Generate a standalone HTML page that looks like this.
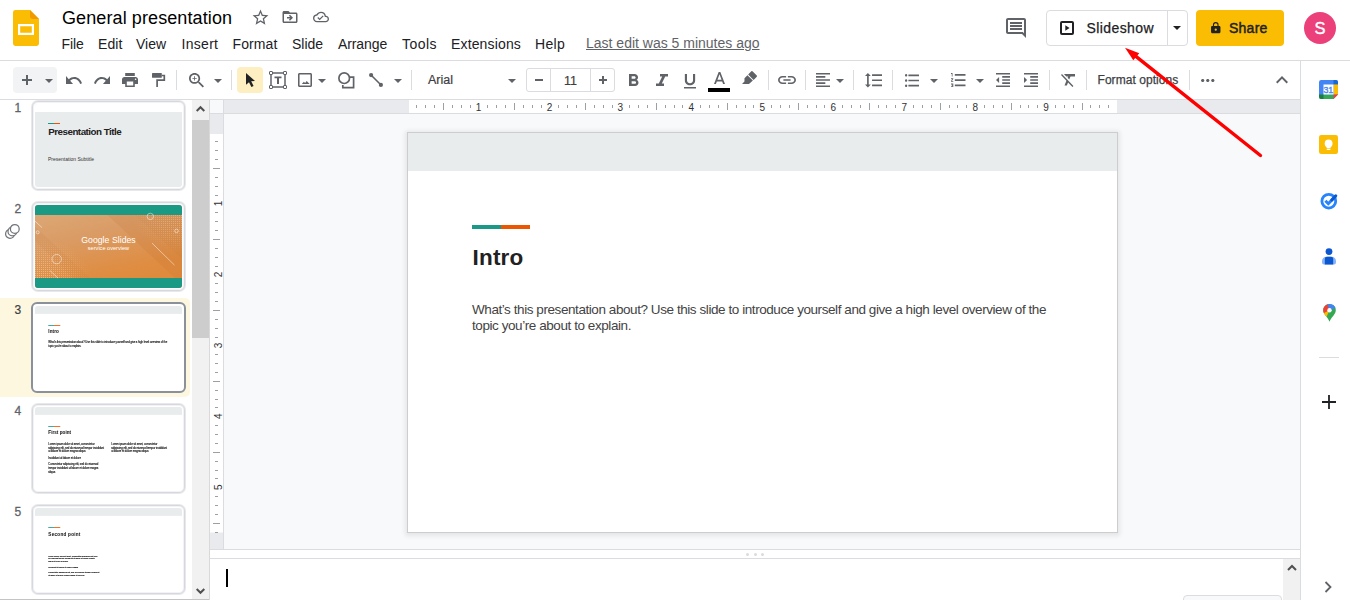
<!DOCTYPE html>
<html lang="en">
<head>
<meta charset="utf-8">
<title>General presentation - Google Slides</title>
<style>
*{box-sizing:border-box;margin:0;padding:0}
html,body{width:1350px;height:600px;overflow:hidden;background:#fff}
body{position:relative;font-family:"Liberation Sans",Arial,sans-serif;color:#202124;-webkit-font-smoothing:antialiased}
.abs{position:absolute}
.t{position:absolute;white-space:nowrap;line-height:1}
svg{position:absolute;overflow:visible}
/* header */
#hdr{position:absolute;left:0;top:0;width:1350px;height:61px;background:#fff;border-bottom:1px solid #dadce0}
#title{left:62px;top:8px;font-size:18px;line-height:20px;color:#000}
.menu{font-size:14px;top:36px;line-height:16px;color:#202124}
#lastedit{color:#5f6368;text-decoration:underline;top:35px}
/* toolbar */
#tb{position:absolute;left:0;top:61px;width:1300px;height:39px;background:#fff;border-bottom:1px solid #dadce0}
.sep{position:absolute;top:70px;width:1px;height:20px;background:#dadce0}
.dd{position:absolute;width:0;height:0;border-left:4px solid transparent;border-right:4px solid transparent;border-top:4px solid #5f6368;top:79px}
/* side panel */
#side{position:absolute;left:1300px;top:61px;width:50px;height:539px;background:#fff;border-left:1px solid #dadce0}
/* filmstrip */
#film{position:absolute;left:0;top:100px;width:192px;height:500px;background:#fff;overflow:hidden}
.num{position:absolute;font-size:12px;line-height:12px;color:#5f6368;width:21.200px;text-align:right;left:0;-webkit-text-stroke:.3px #5f6368}
.th{position:absolute;left:32px;width:153px;height:89px;border:1px solid #d6d8dd;border-radius:6px;background:#fff;overflow:hidden;box-shadow:0 0 0 1px rgba(214,216,221,.6),inset 0 0 0 1px rgba(214,216,221,.3)}
.th .ts{position:absolute;left:2px;top:2px;width:147px;height:83px;background:#fff;overflow:hidden;border-radius:3px}
.th.sel{left:31px;width:155px;height:91px;border:2px solid #8a919b;border-radius:6px;padding:0;box-shadow:none}
.th.sel .ts{left:2px;top:2px}
.sl{position:absolute;left:0;top:0;width:710px;height:400px;transform:scale(.20704);transform-origin:0 0;background:#fff;overflow:hidden}
.tband{position:absolute;left:0;top:0;width:147px;height:7.800px;background:#e9ecec}
.tacc{position:absolute;left:13px;width:12px;height:1px;background:linear-gradient(90deg,#1a9988 0,#1a9988 50%,#eb5600 50%,#eb5600 100%)}
.tt{font-weight:bold;color:#212121}
#vsb{position:absolute;left:192px;top:100px;width:17px;height:500px;background:#f1f1f1}
/* rulers + canvas */
#corner{position:absolute;left:210px;top:100px;width:14px;height:14px;background:#f8f9fa;border-right:1px solid #dadce0;border-bottom:1px solid #dadce0}
#hr{position:absolute;left:224px;top:100px;width:1076px;height:14px;background:#e8eaed;border-bottom:1px solid #dadce0;overflow:hidden}
#vr{position:absolute;left:210px;top:114px;width:14px;height:435px;background:#e8eaed;border-right:1px solid #dadce0;overflow:hidden}
#canvas{position:absolute;left:224px;top:114px;width:1076px;height:435px;background:#f8f9fa}
#slide{position:absolute;left:407px;top:132px;width:711px;height:401px;background:#fff;border:1px solid #cdcdcd;box-shadow:0 1px 4px 2px rgba(60,64,67,.1);overflow:hidden}
.band{position:absolute;left:0;top:0;width:710px;height:38px;background:#e9ecec}
.acc{position:absolute;left:65px;top:93px;width:58px;height:4px;background:linear-gradient(90deg,#1a9988 0,#1a9988 50%,#eb5600 50%,#eb5600 100%)}
.h1{position:absolute;left:65px;font-weight:bold;color:#212121;white-space:nowrap}
.bd{position:absolute;color:#434343}
.sl .bd{color:#1a1a1a;-webkit-text-stroke:.6px #1a1a1a}
.sl .h1{-webkit-text-stroke:.3px #212121}
/* notes */
#notes{position:absolute;left:210px;top:549px;width:1090px;height:51px;background:#fff;border-top:1px solid #dadce0}
</style>
</head>
<body>
<!-- HEADER -->
<div id="hdr">
<!-- slides logo -->
<svg style="left:13px;top:10px" width="26" height="36" viewBox="0 0 26 36"><path d="M2.4 0H17l9 9v24.6A2.4 2.4 0 0 1 23.6 36H2.4A2.4 2.4 0 0 1 0 33.600V2.4A2.4 2.4 0 0 1 2.400 0z" fill="#fbbc04"/><path d="M17 0l9 9h-6.600A2.4 2.4 0 0 1 17 6.600z" fill="#f29900"/><path d="M5 14h16v11H5zM7.200 16.200v6.600h11.600v-6.600z" fill="#fff" fill-rule="evenodd"/></svg>
<div class="t" id="title" style="letter-spacing:.1px">General presentation</div>
<!-- star -->
<svg style="left:251.400px;top:7.800px" width="19" height="19" viewBox="0 0 24 24"><path d="M22 9.240l-7.190-.62L12 2 9.190 8.630 2 9.240l5.460 4.730L5.820 21 12 17.270 18.180 21l-1.630-7.030L22 9.240zM12 15.400l-3.760 2.270 1-4.280-3.320-2.880 4.380-.38L12 6.100l1.710 4.040 4.380.38-3.320 2.880 1 4.280L12 15.400z" fill="#5f6368"/></svg>
<!-- move to folder -->
<svg style="left:281.200px;top:8px" width="18" height="18" viewBox="0 0 24 24"><path d="M20 6h-8l-2-2H4c-1.100 0-2 .9-2 2v12c0 1.100.9 2 2 2h16c1.100 0 2-.9 2-2V8c0-1.100-.9-2-2-2zm0 12H4V8h16v10zm-8.010-9l-1.410 1.410L12.160 12H8v2h4.160l-1.590 1.590L11.990 17 16 13.010 11.990 9z" fill="#5f6368"/></svg>
<!-- cloud done -->
<svg style="left:313px;top:9.100px" width="16" height="16" viewBox="0 0 24 24"><path d="M19.350 10.040A7.490 7.490 0 0 0 12 4C9.110 4 6.600 5.640 5.350 8.040A5.994 5.994 0 0 0 0 14c0 3.310 2.690 6 6 6h13c2.760 0 5-2.240 5-5 0-2.640-2.050-4.780-4.650-4.960zM19 18H6c-2.210 0-4-1.790-4-4 0-2.050 1.530-3.760 3.560-3.970l1.070-.11.500-.95A5.469 5.469 0 0 1 12 6c2.620 0 4.880 1.860 5.390 4.430l.3 1.500 1.530.11A2.980 2.980 0 0 1 22 15c0 1.650-1.350 3-3 3zm-9-3.820l-2.090-2.090L6.500 13.500 10 17l6.010-6.010-1.410-1.410z" fill="#5f6368"/></svg>
<div class="t menu" style="left:61.5px;letter-spacing:-.1px">File</div>
<div class="t menu" style="left:98px;letter-spacing:.1px">Edit</div>
<div class="t menu" style="left:136px">View</div>
<div class="t menu" style="left:181.500px;letter-spacing:.3px">Insert</div>
<div class="t menu" style="left:232.500px;letter-spacing:.1px">Format</div>
<div class="t menu" style="left:292px">Slide</div>
<div class="t menu" style="left:338px;letter-spacing:-.1px">Arrange</div>
<div class="t menu" style="left:402px;letter-spacing:.45px">Tools</div>
<div class="t menu" style="left:451px;letter-spacing:.15px">Extensions</div>
<div class="t menu" style="left:535px;letter-spacing:.3px">Help</div>
<div class="t menu" id="lastedit" style="left:586px">Last edit was 5 minutes ago</div>
<!-- comments -->
<svg style="left:1004px;top:16px" width="24" height="24" viewBox="0 0 24 24"><path d="M21.990 4c0-1.100-.89-2-1.990-2H4c-1.100 0-2 .9-2 2v12c0 1.100.9 2 2 2h14l4 4-.01-18zM20 4v13.170L18.830 16H4V4h16zM6 12h12v2H6zm0-3h12v2H6zm0-3h12v2H6z" fill="#5f6368"/></svg>
<!-- slideshow button -->
<div class="abs" style="left:1046px;top:10px;width:142px;height:36px;border:1px solid #dadce0;border-radius:4px;background:#fff"></div>
<div class="abs" style="left:1167px;top:10px;width:1px;height:36px;background:#dadce0"></div>
<svg style="left:1060px;top:21px" width="14" height="14" viewBox="0 0 14 14"><rect x="1" y="1" width="12" height="12" rx="1" fill="none" stroke="#202124" stroke-width="2"/><path d="M5.300 4.200L9.600 7 5.300 9.800z" fill="#202124"/></svg>
<div class="t" style="left:1086.500px;top:20px;font-size:14px;line-height:16px;-webkit-text-stroke:.25px #202124;letter-spacing:.4px;color:#202124">Slideshow</div>
<div class="abs" style="left:1173px;top:26px;width:0;height:0;border-left:4px solid transparent;border-right:4px solid transparent;border-top:4px solid #202124"></div>
<!-- share button -->
<div class="abs" style="left:1196px;top:10px;width:88px;height:36px;border-radius:4px;background:#fbbc04"></div>
<svg style="left:1211px;top:22px" width="9.500" height="11.300" viewBox="0 0 10 12"><path d="M8.600 4.200H8V3a3 3 0 0 0-6 0v1.200h-.6C.7 4.200 0 4.800 0 5.500v5.200c0 .7.700 1.300 1.400 1.300h7.200c.7 0 1.400-.6 1.400-1.300V5.500c0-.7-.7-1.300-1.400-1.300zM5 9.300a1.200 1.200 0 1 1 0-2.400 1.200 1.200 0 0 1 0 2.400zM6.800 4.200H3.200V3a1.800 1.800 0 0 1 3.600 0v1.200z" fill="#202124"/></svg>
<div class="t" style="left:1229px;top:20px;font-size:14px;line-height:16px;-webkit-text-stroke:.45px #202124;letter-spacing:.25px;color:#202124">Share</div>
<!-- avatar -->
<div class="abs" style="left:1304px;top:12px;width:32px;height:32px;border-radius:50%;background:#ec407a"></div>
<div class="t" style="left:1304px;top:18px;width:32px;text-align:center;font-size:16.500px;line-height:20px;color:#fff;-webkit-text-stroke:.4px #fff">S</div>
</div>
<!-- TOOLBAR -->
<div id="tb"></div>
<!-- toolbar items (page coords) -->
<div class="abs" style="left:13px;top:67px;width:44px;height:26px;border-radius:4px;background:#f1f3f4"></div>
<div class="abs" style="left:237px;top:67px;width:26px;height:26px;border-radius:4px;background:#feefc3"></div>
<div class="abs" style="left:22px;top:79px;width:10px;height:2px;background:#5f6368"></div><div class="abs" style="left:26px;top:75px;width:2px;height:10px;background:#5f6368"></div>
<svg style="left:66px;top:75.5px" width="16" height="8" viewBox="2 7 20.47 9" preserveAspectRatio="none"><path d="M12.5 8c-2.650 0-5.050.99-6.900 2.600L2 7v9h9l-3.620-3.620c1.390-1.160 3.160-1.880 5.120-1.880 3.540 0 6.550 2.310 7.600 5.500l2.370-.78C21.080 11.030 17.150 8 12.500 8z" fill="#5f6368"/></svg>
<svg style="left:94px;top:75.5px" width="16" height="8" viewBox="1.54 7 20.46 9" preserveAspectRatio="none"><path d="M18.400 10.600C16.550 8.990 14.150 8 11.500 8c-4.650 0-8.580 3.030-9.960 7.220L3.900 16c1.050-3.190 4.050-5.500 7.600-5.500 1.950 0 3.730.72 5.120 1.880L13 16h9V7l-3.600 3.600z" fill="#5f6368"/></svg>
<svg style="left:122px;top:73px" width="16" height="14" viewBox="2 3 20 18" preserveAspectRatio="none"><path d="M19 8H5c-1.660 0-3 1.340-3 3v6h4v4h12v-4h4v-6c0-1.660-1.340-3-3-3zm-3 11H8v-5h8v5zm3-7c-.55 0-1-.45-1-1s.45-1 1-1 1 .45 1 1-.45 1-1 1zm-1-9H6v4h12V3z" fill="#5f6368"/></svg>
<svg style="left:152px;top:73px" width="14" height="14" viewBox="0 0 14 14"><rect x="0" y="0" width="9.800" height="4.800" rx=".6" fill="#5f6368"/><path d="M9.800 2.500H12.300V7.100H5.100V14" fill="none" stroke="#5f6368" stroke-width="1.700"/></svg>
<svg style="left:189px;top:73px" width="15" height="14.5" viewBox="3 3 17.49 17.49" preserveAspectRatio="none"><path d="M15.500 14h-.79l-.28-.27C15.410 12.590 16 11.110 16 9.500 16 5.910 13.090 3 9.500 3S3 5.910 3 9.500 5.910 16 9.500 16c1.610 0 3.090-.59 4.230-1.570l.27.28v.79l5 4.990L20.490 19l-4.990-5zm-6 0C7.010 14 5 11.990 5 9.500S7.010 5 9.500 5 14 7.010 14 9.500 11.990 14 9.500 14zm.5-7H9v2H7v1h2v2h1v-2h2V9h-2z" fill="#5f6368"/></svg>
<svg style="left:246px;top:73px" width="9" height="14" viewBox="0 0 9 15" preserveAspectRatio="none"><path d="M0 0L0 12.500L3 9.800L5.400 15L7.600 14L5.200 8.900L9 8.500Z" fill="#202124"/></svg>
<svg style="left:298px;top:73px" width="14" height="14" viewBox="3 3 18 18" preserveAspectRatio="none"><path d="M19 5v14H5V5h14m0-2H5c-1.100 0-2 .9-2 2v14c0 1.100.9 2 2 2h14c1.100 0 2-.9 2-2V5c0-1.100-.9-2-2-2zm-4.860 10.360l-2 2.580L10.500 14.300 8 17h10l-3.860-3.640z" fill="#5f6368"/></svg>
<svg style="left:629px;top:74px" width="9.5" height="12" viewBox="7 4 10.75 14" preserveAspectRatio="none"><path d="M15.600 10.790c.97-.67 1.650-1.770 1.650-2.790 0-2.260-1.750-4-4-4H7v14h7.040c2.090 0 3.710-1.700 3.710-3.790 0-1.520-.86-2.820-2.150-3.420zM10 6.500h3c.83 0 1.500.67 1.500 1.500s-.67 1.500-1.500 1.500h-3v-3zm3.500 9H10v-3h3.500c.83 0 1.500.67 1.500 1.500s-.67 1.500-1.500 1.500z" fill="#5f6368"/></svg>
<svg style="left:656px;top:74px" width="12" height="12" viewBox="6 4 12 14" preserveAspectRatio="none"><path d="M10 4v3h2.210l-3.420 8H6v3h8v-3h-2.210l3.420-8H18V4z" fill="#5f6368"/></svg>
<svg style="left:684px;top:74px" width="12" height="14.5" viewBox="5 3 14 18" preserveAspectRatio="none"><path d="M12 17c3.310 0 6-2.690 6-6V3h-2.500v8c0 1.930-1.570 3.500-3.500 3.500S8.500 12.930 8.500 11V3H6v8c0 3.310 2.690 6 6 6zm-7 2v2h14v-2H5z" fill="#5f6368"/></svg>
<svg style="left:713.5px;top:72px" width="11" height="12" viewBox="5.5 3 12.99 14" preserveAspectRatio="none"><path d="M11 3L5.500 17h2.250l1.120-3h6.250l1.120 3h2.250L13 3h-2zm-1.380 9L12 5.670 14.380 12H9.620z" fill="#5f6368"/></svg>
<svg style="left:742px;top:71px" width="15" height="13" viewBox="0 0.38 14.62 12.62" preserveAspectRatio="none"><path d="M10.200 0.600L14.400 4.800a.8.800 0 0 1 0 1.100L11.300 9 6 3.700 9.100.6a.8.800 0 0 1 1.100 0zM5.300 4.400l5.300 5.300L6.800 13H3.700l-1.300 0H0l2.400-2.400V7.300z" fill="#5f6368"/></svg>
<svg style="left:778px;top:76px" width="18" height="8" viewBox="2 7 20 10" preserveAspectRatio="none"><path d="M3.900 12c0-1.710 1.390-3.100 3.100-3.100h4V7H7c-2.760 0-5 2.240-5 5s2.240 5 5 5h4v-1.900H7c-1.710 0-3.100-1.390-3.100-3.100zM8 13h8v-2H8v2zm9-6h-4v1.900h4c1.710 0 3.100 1.390 3.100 3.100s-1.390 3.100-3.100 3.100h-4V17h4c2.760 0 5-2.240 5-5s-2.240-5-5-5z" fill="#5f6368"/></svg>
<svg style="left:816px;top:73px" width="14" height="14" viewBox="3 3 18 18" preserveAspectRatio="none"><path d="M15 15H3v2h12v-2zm0-8H3v2h12V7zM3 13h18v-2H3v2zm0 8h18v-2H3v2zM3 3v2h18V3H3z" fill="#5f6368"/></svg>
<svg style="left:865px;top:73px" width="17" height="14.5" viewBox="1.5 3.5 20.5 17" preserveAspectRatio="none"><path d="M6 7h2.500L5 3.500 1.500 7H4v10H1.500L5 20.500 8.500 17H6V7zm4-2v2h12V5H10zm0 14h12v-2H10v2zm0-6h12v-2H10v2z" fill="#5f6368"/></svg>
<svg style="left:905px;top:73.5px" width="14" height="13" viewBox="2.5 4.5 18.5 15" preserveAspectRatio="none"><path d="M4 10.500c-.83 0-1.500.67-1.500 1.500s.67 1.500 1.500 1.500 1.500-.67 1.500-1.500-.67-1.500-1.500-1.500zm0-6c-.83 0-1.500.67-1.500 1.500S3.170 7.500 4 7.500 5.500 6.830 5.500 6 4.830 4.500 4 4.500zm0 12c-.83 0-1.500.68-1.500 1.500s.68 1.500 1.500 1.500 1.500-.68 1.500-1.500-.67-1.500-1.500-1.500zM7 19h14v-2H7v2zm0-6h14v-2H7v2zm0-8v2h14V5H7z" fill="#5f6368"/></svg>
<svg style="left:950.5px;top:73px" width="14.5" height="14" viewBox="2 4 19 16" preserveAspectRatio="none"><path d="M2 17h2v.5H3v1h1v.5H2v1h3v-4H2v1zm1-9h1V4H2v1h1v3zm-1 3h1.800L2 13.100v.9h3v-1H3.200L5 10.900V10H2v1zm5-6v2h14V5H7zm0 14h14v-2H7v2zm0-6h14v-2H7v2z" fill="#5f6368"/></svg>
<svg style="left:996px;top:73px" width="14" height="14" viewBox="3 3 18 18" preserveAspectRatio="none"><path d="M11 17h10v-2H11v2zm-8-5l4 4V8l-4 4zm0 9h18v-2H3v2zM3 3v2h18V3H3zm8 6h10V7H11v2zm0 4h10v-2H11v2z" fill="#5f6368"/></svg>
<svg style="left:1024px;top:73px" width="14" height="14" viewBox="3 3 18 18" preserveAspectRatio="none"><path d="M3 21h18v-2H3v2zM3 8v8l4-4-4-4zm8 9h10v-2H11v2zM3 3v2h18V3H3zm8 6h10V7H11v2zm0 4h10v-2H11v2z" fill="#5f6368"/></svg>
<svg style="left:1061px;top:74px" width="14" height="13" viewBox="2 5 18 16" preserveAspectRatio="none"><path d="M3.270 5L2 6.270l6.970 6.970L6.500 19h3l1.570-3.660L16.730 21 18 19.730 3.550 5.270 3.270 5zM6 5v.18L8.820 8h2.400l-.72 1.680 2.100 2.100L14.210 8H20V5H6z" fill="#5f6368"/></svg>
<svg style="left:1201px;top:78.5px" width="13.5" height="3" viewBox="4 10 16 4" preserveAspectRatio="none"><path d="M6 10c-1.100 0-2 .9-2 2s.9 2 2 2 2-.9 2-2-.9-2-2-2zm12 0c-1.100 0-2 .9-2 2s.9 2 2 2 2-.9 2-2-.9-2-2-2zm-6 0c-1.100 0-2 .9-2 2s.9 2 2 2 2-.9 2-2-.9-2-2-2z" fill="#5f6368"/></svg>
<svg style="left:1276px;top:76px" width="12" height="7.5" viewBox="6 8 12 7.41" preserveAspectRatio="none"><path d="M12 8l-6 6 1.410 1.410L12 10.830l4.590 4.580L18 14z" fill="#5f6368"/></svg>
<div class="sep" style="left:176px"></div>
<div class="sep" style="left:231px"></div>
<div class="sep" style="left:411px"></div>
<div class="sep" style="left:768px"></div>
<div class="sep" style="left:805px"></div>
<div class="sep" style="left:853px"></div>
<div class="sep" style="left:892px"></div>
<div class="sep" style="left:1049px"></div>
<div class="sep" style="left:1086px"></div>
<div class="sep" style="left:1189px"></div>
<div class="dd" style="left:45px"></div>
<div class="dd" style="left:214px"></div>
<div class="dd" style="left:318px"></div>
<div class="dd" style="left:394px"></div>
<div class="dd" style="left:508px"></div>
<div class="dd" style="left:836px"></div>
<div class="dd" style="left:930px"></div>
<div class="dd" style="left:976px"></div>
<!-- text box icon -->
<svg style="left:269px;top:71px" width="18" height="18" viewBox="0 0 18 18"><path d="M2 2h14v14H2z" fill="none" stroke="#5f6368" stroke-width="1.500"/><path d="M5.500 5.500h7v1.800h-2.500v5.700h-2V7.300H5.500z" fill="#5f6368"/><g fill="#fff" stroke="#5f6368" stroke-width="1"><rect x=".5" y=".5" width="3" height="3" rx=".5"/><rect x="14.500" y=".5" width="3" height="3" rx=".5"/><rect x=".5" y="14.500" width="3" height="3" rx=".5"/><rect x="14.500" y="14.500" width="3" height="3" rx=".5"/></g></svg>
<!-- shape icon -->
<svg style="left:338px;top:72px" width="17" height="17" viewBox="0 0 17 17"><circle cx="6.200" cy="6.200" r="5.300" fill="none" stroke="#5f6368" stroke-width="1.700"/><path d="M12 5.200h3.600v10.400H4.800V13" fill="none" stroke="#5f6368" stroke-width="1.700"/></svg>
<!-- line icon -->
<svg style="left:369px;top:73px" width="14" height="14" viewBox="0 0 14 14"><path d="M2 2L12 12" stroke="#5f6368" stroke-width="1.600"/><circle cx="2.100" cy="2.100" r="2.100" fill="#5f6368"/><circle cx="11.900" cy="11.900" r="2.100" fill="#5f6368"/></svg>
<div class="t" style="left:428px;top:73px;font-size:12.500px;line-height:14px;color:#3c4043;-webkit-text-stroke:.2px #3c4043">Arial</div>
<!-- font size -->
<div class="abs" style="left:526px;top:68px;width:89px;height:24px;border:1px solid #dadce0;border-radius:3px"></div>
<div class="abs" style="left:550px;top:68px;width:1px;height:24px;background:#dadce0"></div>
<div class="abs" style="left:590px;top:68px;width:1px;height:24px;background:#dadce0"></div>
<div class="abs" style="left:535px;top:79px;width:8px;height:2px;background:#5f6368"></div>
<div class="abs" style="left:599px;top:79px;width:8px;height:2px;background:#5f6368"></div>
<div class="abs" style="left:602px;top:76px;width:2px;height:8px;background:#5f6368"></div>
<div class="t" style="left:551px;top:74px;width:39px;text-align:center;font-size:12.500px;line-height:14px;color:#3c4043;-webkit-text-stroke:.2px #3c4043">11</div>
<!-- text color bar -->
<div class="abs" style="left:708px;top:88px;width:22px;height:4px;background:#000"></div>
<div class="t" style="left:1097.500px;top:73px;font-size:12px;line-height:14px;letter-spacing:.05px;color:#3c4043;-webkit-text-stroke:.25px #3c4043">Format options</div>
<!-- FILMSTRIP -->
<div id="film">
<!-- coords relative to film top (page y - 100) -->
<div class="abs" style="left:0;top:198px;width:190px;height:99px;background:#fef7e0;border-radius:0 5px 5px 0"></div>
<div class="num" style="top:2px">1</div>
<div class="num" style="top:103px">2</div>
<div class="num" style="top:204px;color:#3c4043;-webkit-text-stroke:.2px #3c4043">3</div>
<div class="num" style="top:305px">4</div>
<div class="num" style="top:406px">5</div>
<!-- motion icon -->
<svg style="left:4px;top:123px" width="17" height="17" viewBox="0 0 17 17"><g fill="#fff" stroke="#70757a" stroke-width="1.250"><circle cx="6" cy="10.900" r="4.400"/><circle cx="8.400" cy="8.400" r="4.400"/><circle cx="10.800" cy="5.900" r="4.400"/></g></svg>
<!-- thumb 1 -->
<div class="th" style="top:1px"><div class="ts" style="background:#e9ecec"><div class="abs" style="left:0;top:0;width:147px;height:8px;background:#fff"></div>
<div class="tacc" style="top:19px"></div>
<div class="t tt" style="left:13.200px;top:22.300px;font-size:9.800px;line-height:12px;letter-spacing:-.5px">Presentation Title</div>
<div class="t" style="left:13px;top:52px;font-size:5px;line-height:6px;letter-spacing:0;color:#333">Presentation Subtitle</div>
</div></div>
<!-- thumb 2 -->
<div class="th" style="top:102px"><div class="ts" style="background:linear-gradient(168deg,#dcab7a 0%,#da9c66 35%,#df8d42 72%,#df8838 100%)">
<div class="abs" style="left:0;top:0;width:147px;height:9.600px;background:#1a9985"></div>
<div class="abs" style="left:0;top:73px;width:147px;height:10px;background:#1a9985"></div>
<svg style="left:0;top:10px" width="147" height="63" viewBox="0 .4 147 63">
<defs><pattern id="dots" width="2" height="2" patternUnits="userSpaceOnUse" patternTransform="translate(0 .4)"><rect x="0" y="0" width="1" height="1" fill="#ffe9c8"/></pattern>
<radialGradient id="fa" cx="1" cy="0" r="1"><stop offset="0" stop-color="#fff" stop-opacity=".36"/><stop offset=".55" stop-color="#fff" stop-opacity=".24"/><stop offset="1" stop-color="#fff" stop-opacity="0"/></radialGradient>
<radialGradient id="fb" cx="0" cy="1" r="1"><stop offset="0" stop-color="#fff" stop-opacity=".5"/><stop offset=".6" stop-color="#fff" stop-opacity=".28"/><stop offset="1" stop-color="#fff" stop-opacity="0"/></radialGradient>
<mask id="ma"><rect x="97" y="0" width="50" height="38" fill="url(#fa)"/></mask><mask id="mb"><rect x="0" y="22" width="56" height="41.400" fill="url(#fb)"/></mask></defs>
<path d="M72 0L100 0 147 44 147 63.400 140 63.400z" fill="#b8672a" fill-opacity=".13"/><path d="M100 0L147 0 147 44z" fill="#b8672a" fill-opacity=".2"/>
<path d="M0 12L0 26 38 63.400 55 63.400z" fill="#c97a35" fill-opacity=".1"/>
<rect x="97" y="0" width="50" height="38" fill="url(#dots)" mask="url(#ma)"/><rect x="0" y="22" width="56" height="41.400" fill="url(#dots)" mask="url(#mb)"/>
<g fill="none" stroke="#fff" stroke-opacity=".8" stroke-width=".6"><circle cx="115.300" cy="1.800" r="3.200"/><circle cx="141.500" cy="16.300" r="1.800"/><circle cx="2.700" cy="17.700" r="1.500"/><circle cx="21.700" cy="44.500" r="4.700"/><path d="M0 6.500l7 6.500M117 28.500l22.500 22M15 56l8 7.500"/></g></svg>
<div class="t" style="left:0;top:30px;width:147px;text-align:center;font-size:8.700px;line-height:10px;color:#fff;letter-spacing:.03px">Google Slides</div>
<div class="t" style="left:0;top:39.600px;width:147px;text-align:center;font-size:5.600px;line-height:6px;color:#fff">service overview</div>
</div></div>
<!-- thumb 3 (selected) -->
<div class="th sel" style="top:202px"><div class="ts"><div class="sl"><div class="band"></div>
<div class="acc" style="left:64px;top:92px"></div>
<div class="h1" style="left:64.500px;top:111.400px;font-size:22px;line-height:26px;letter-spacing:.42px">Intro</div>
<div class="bd" style="left:64px;top:168px;font-size:13.500px;line-height:16.800px;white-space:nowrap;letter-spacing:-.43px">What’s this presentation about? Use this slide to introduce yourself and give a high level overview of the<br>topic you’re about to explain.</div>
</div></div></div>
<!-- thumb 4 -->
<div class="th" style="top:304px"><div class="ts"><div class="sl"><div class="band"></div>
<div class="acc" style="left:64px;top:92px"></div>
<div class="h1" style="left:64.500px;top:111.400px;font-size:22px;line-height:26px;letter-spacing:.2px">First point</div>
<div class="bd" style="left:64px;top:172px;font-size:13.500px;line-height:16.800px;white-space:nowrap;letter-spacing:-.43px">Lorem ipsum dolor sit amet, consectetur<br>adipiscing elit, sed do eiusmod tempor incididunt<br>ut labore et dolore magna aliqua</div>
<div class="bd" style="left:64px;top:237px;font-size:13.500px;line-height:16.800px;white-space:nowrap;letter-spacing:-.43px">Incididunt ut labore et dolore</div>
<div class="bd" style="left:64px;top:266px;font-size:13.500px;line-height:18.800px;white-space:nowrap;letter-spacing:-.43px">Consectetur adipiscing elit, sed do eiusmod<br>tempor incididunt ut labore et dolore magna<br>aliqua</div>
<div class="bd" style="left:368px;top:172px;font-size:13.500px;line-height:16.800px;white-space:nowrap;letter-spacing:-.43px">Lorem ipsum dolor sit amet, consectetur<br>adipiscing elit, sed do eiusmod tempor incididunt<br>ut labore et dolore magna aliqua</div>
</div></div></div>
<!-- thumb 5 -->
<div class="th" style="top:405px"><div class="ts"><div class="sl"><div class="band"></div>
<div class="acc" style="left:64px;top:92px"></div>
<div class="h1" style="left:64.500px;top:116px;font-size:22px;line-height:26px;letter-spacing:1.400px">Second point</div>
<div class="bd" style="left:64px;top:226px;font-size:9.500px;line-height:12px;white-space:nowrap;letter-spacing:-.2px">Lorem ipsum dolor sit amet, consectetur adipiscing elit, sed<br>do eiusmod tempor incididunt ut labore et dolore magna<br>aliqua ut enim ad minim</div>
<div class="bd" style="left:64px;top:280.500px;font-size:9.500px;line-height:12px;white-space:nowrap;letter-spacing:-.2px">Incididunt ut labore et dolore magna</div>
<div class="bd" style="left:64px;top:304.500px;font-size:9.500px;line-height:13.500px;white-space:nowrap;letter-spacing:-.2px">Consectetur adipiscing elit, sed do eiusmod tempor incididunt<br>ut labore et dolore magna aliqua ut enim ad</div>
</div></div></div>
<div class="abs" style="left:0;top:499px;width:192px;height:1px;background:#c4c4c4"></div>
</div>
<div id="vsb">
<div class="abs" style="left:0;top:20px;width:17px;height:218px;background:#cdcdcd"></div>
<svg style="left:4px;top:4.500px" width="9" height="7" viewBox="0 0 9 7"><path d="M.7 6L4.500 2.200 8.300 6" fill="none" stroke="#505050" stroke-width="2"/></svg>
<svg style="left:4px;top:487.500px" width="9" height="7" viewBox="0 0 9 7"><path d="M.7 1L4.500 4.800 8.300 1" fill="none" stroke="#505050" stroke-width="2"/></svg>
<div class="abs" style="left:0;top:499px;width:18px;height:1px;background:#c4c4c4"></div>
</div>
<!-- RULERS / CANVAS -->
<div id="canvas"></div>
<div class="abs" style="left:209px;top:100px;width:1px;height:500px;background:#d9d9d9"></div>
<div id="corner"></div>
<div id="hr"></div>
<svg style="left:224px;top:100px" width="1076" height="13" viewBox="0 0 1076 13"><rect x="185" y="0" width="708" height="13" fill="#fff"/><path d="M192.5 5v3M201.5 5v3M210.5 5v3M219.5 3v7M228.5 5v3M237.5 5v3M246.5 5v3M263.5 5v3M272.5 5v3M281.5 5v3M290.5 3v7M299.5 5v3M308.5 5v3M317.5 5v3M334.5 5v3M343.5 5v3M352.5 5v3M361.5 3v7M370.5 5v3M379.5 5v3M388.5 5v3M405.5 5v3M414.5 5v3M423.5 5v3M432.5 3v7M441.5 5v3M450.5 5v3M458.5 5v3M476.5 5v3M485.5 5v3M494.5 5v3M503.5 3v7M512.5 5v3M521.5 5v3M529.5 5v3M547.5 5v3M556.5 5v3M565.5 5v3M574.5 3v7M583.5 5v3M592.5 5v3M600.5 5v3M618.5 5v3M627.5 5v3M636.5 5v3M645.5 3v7M654.5 5v3M662.5 5v3M671.5 5v3M689.5 5v3M698.5 5v3M707.5 5v3M716.5 3v7M725.5 5v3M733.5 5v3M742.5 5v3M760.5 5v3M769.5 5v3M778.5 5v3M787.5 3v7M796.5 5v3M804.5 5v3M813.5 5v3M831.5 5v3M840.5 5v3M849.5 5v3M858.5 3v7M866.5 5v3M875.5 5v3M884.5 5v3" stroke="#9aa0a6" stroke-width="1" fill="none"/><g font-family="Liberation Sans, Arial, sans-serif" font-size="10" fill="#303134" text-anchor="middle"><text x="254.46" y="10.700">1</text><text x="325.42" y="10.700">2</text><text x="396.38" y="10.700">3</text><text x="467.34" y="10.700">4</text><text x="538.3" y="10.700">5</text><text x="609.26" y="10.700">6</text><text x="680.22" y="10.700">7</text><text x="751.18" y="10.700">8</text><text x="822.14" y="10.700">9</text></g></svg>
<div id="vr"></div>
<svg style="left:210px;top:114px" width="13" height="435" viewBox="0 0 13 435"><rect x="0" y="20" width="13" height="398.5" fill="#fff"/><path d="M5 27.5h3M5 36.5h3M5 45.5h3M3 54.5h7M5 63.5h3M5 72.5h3M5 81.5h3M5 98.5h3M5 107.5h3M5 116.5h3M3 125.5h7M5 134.5h3M5 143.5h3M5 152.5h3M5 169.5h3M5 178.5h3M5 187.5h3M3 196.5h7M5 205.5h3M5 214.5h3M5 223.5h3M5 240.5h3M5 249.5h3M5 258.5h3M3 267.5h7M5 276.5h3M5 285.5h3M5 293.5h3M5 311.5h3M5 320.5h3M5 329.5h3M3 338.5h7M5 347.5h3M5 356.5h3M5 364.5h3M5 382.5h3M5 391.5h3M5 400.5h3M3 409.5h7M5 418.5h3" stroke="#9aa0a6" stroke-width="1" fill="none"/><g font-family="Liberation Sans, Arial, sans-serif" font-size="10" fill="#303134" text-anchor="middle"><text transform="translate(11.900 89.46) rotate(-90)" x="0" y="0">1</text><text transform="translate(11.900 160.42) rotate(-90)" x="0" y="0">2</text><text transform="translate(11.900 231.38) rotate(-90)" x="0" y="0">3</text><text transform="translate(11.900 302.34) rotate(-90)" x="0" y="0">4</text><text transform="translate(11.900 373.3) rotate(-90)" x="0" y="0">5</text></g></svg>
<div id="slide">
<div class="band"></div>
<div class="acc" style="left:64px;top:92px"></div>
<div class="h1" style="left:64.500px;top:111.800px;font-size:22.500px;line-height:26px;letter-spacing:.2px">Intro</div>
<div class="bd" style="left:64px;top:168.600px;font-size:13.500px;line-height:16.800px;white-space:nowrap;letter-spacing:-.43px">What’s this presentation about? Use this slide to introduce yourself and give a high level overview of the<br>topic you’re about to explain.</div>
</div>
<!-- NOTES -->
<div id="notes">
<div class="abs" style="left:0;top:8px;width:1090px;height:1px;background:#dadce0"></div>
<div class="abs" style="left:536px;top:3px;width:3px;height:3px;border-radius:50%;background:#dadce0"></div>
<div class="abs" style="left:543.500px;top:3px;width:3px;height:3px;border-radius:50%;background:#dadce0"></div>
<div class="abs" style="left:551px;top:3px;width:3px;height:3px;border-radius:50%;background:#dadce0"></div>
<div class="abs" style="left:16px;top:19px;width:2px;height:18px;background:#000"></div>
<div class="abs" style="left:1073px;top:9px;width:17px;height:42px;background:#f1f1f1"></div>
<svg style="left:1076.500px;top:14px" width="10" height="7" viewBox="0 0 10 7"><path d="M1 6l4-4 4 4" fill="none" stroke="#505050" stroke-width="2"/></svg>
<div class="abs" style="left:973px;top:45px;width:99px;height:10px;border:1px solid #dadce0;border-radius:4px;background:#f8f9fa"></div>
</div>
<!-- SIDE PANEL -->
<div id="side"></div>
<!-- side panel icons (page coords) -->
<svg style="left:1319px;top:79.500px" width="19" height="19" viewBox="0 0 19 19">
<defs><clipPath id="calc"><path d="M2.200 0H16.800A2.200 2.200 0 0 1 19 2.200V14.500L14.500 19H2.200A2.200 2.200 0 0 1 0 16.800V2.200A2.200 2.200 0 0 1 2.200 0z"/></clipPath></defs>
<g clip-path="url(#calc)"><rect width="19" height="19" fill="#4285f4"/>
<rect x="14.500" y="0" width="4.500" height="4.700" fill="#1967d2"/>
<rect x="14.500" y="4.500" width="4.500" height="10.200" fill="#fbbc04"/>
<rect x="4.300" y="14.500" width="10.400" height="4.500" fill="#34a853"/>
<rect x="0" y="14.500" width="4.500" height="4.500" fill="#188038"/>
<rect x="14.500" y="14.500" width="4.500" height="4.500" fill="#ea4335"/>
<rect x="4.500" y="4.500" width="10" height="10" fill="#fff"/></g>
<text x="9.300" y="12.800" font-family="Liberation Sans, Arial, sans-serif" font-size="8.800" fill="#4285f4" stroke="#4285f4" stroke-width=".35" text-anchor="middle" letter-spacing="-.2">31</text>
</svg>
<svg style="left:1319px;top:135px" width="19" height="19" viewBox="0 0 19 19"><rect width="19" height="19" rx="2.200" fill="#fbbc04"/><circle cx="9.600" cy="8.500" r="3.900" fill="#fff"/><rect x="7.600" y="11.500" width="4" height="1.600" fill="#fff"/><rect x="7.800" y="13.700" width="3.600" height="1.300" fill="#fff"/></svg>
<svg style="left:1319px;top:191px" width="20" height="20" viewBox="0 0 20 20"><circle cx="9.800" cy="10.200" r="6.900" fill="none" stroke="#2684fc" stroke-width="2.800"/><path d="M6.400 9.800l2.900 2.900 7.300-7.600" fill="none" stroke="#2684fc" stroke-width="3"/><path d="M12.800 9l4-4.200" fill="none" stroke="#0b57d0" stroke-width="3" stroke-linecap="round"/></svg>
<svg style="left:1321px;top:247px" width="16" height="18" viewBox="0 0 16 18"><circle cx="8" cy="4.600" r="3.400" fill="#0b57d0"/><path d="M1 15.500v-1.500c0-2.600 2-4.300 4.200-4.300h5.600c2.200 0 4.200 1.700 4.200 4.300v1.500a2 2 0 0 1-2 2h-10a2 2 0 0 1-2-2z" fill="#8ab4f8"/><path d="M3.800 17.500v-5.500c0-1.400 1-2.300 2.200-2.300h4c1.200 0 2.200.9 2.200 2.300v5.500z" fill="#0b57d0"/></svg>
<svg style="left:1322.500px;top:304px" width="13" height="18" viewBox="0 0 13 18">
<defs><clipPath id="pin"><path d="M6.500 0A6.300 6.300 0 0 0 .2 6.300c0 2.300 1.200 3.900 2.600 5.600 1.500 1.900 3 3.400 3.700 5.900.7-2.500 2.200-4 3.700-5.900 1.400-1.700 2.600-3.300 2.600-5.600A6.300 6.300 0 0 0 6.500 0z"/></clipPath></defs>
<g clip-path="url(#pin)"><rect width="13" height="18" fill="#34a853"/><path d="M0 0H13V4L6.500 6.300 2 0z" fill="#4285f4"/><path d="M0 0H4.500L6.500 6.300 0 11z" fill="#ea4335"/><path d="M0 9.500L6.500 6.300 3 14 0 14z" fill="#fbbc04"/><path d="M13 0L13 3 6.500 6.300 9 0z" fill="#4285f4"/></g>
<circle cx="6.500" cy="6.300" r="2.200" fill="#fff"/></svg>
<div class="abs" style="left:1319px;top:357px;width:20px;height:1px;background:#dadce0"></div>
<svg style="left:1322px;top:395px" width="14" height="14" viewBox="0 0 14 14"><path d="M7 0v14M0 7h14" stroke="#202124" stroke-width="1.800" fill="none"/></svg>
<svg style="left:1324px;top:581px" width="8" height="12" viewBox="0 0 8 12"><path d="M1.500 1L6.500 6 1.500 11" stroke="#5f6368" stroke-width="1.800" fill="none"/></svg>
<!-- ARROW -->
<svg style="left:0;top:0" width="1350" height="600" viewBox="0 0 1350 600"><path d="M1260.500 155.500L1134 54.800" stroke="#ff0000" stroke-width="3.400" stroke-linecap="round" fill="none"/><path d="M1125 47.700L1139.300 53.300 1133.300 60.300z" fill="#ff0000"/></svg>
</body>
</html>
